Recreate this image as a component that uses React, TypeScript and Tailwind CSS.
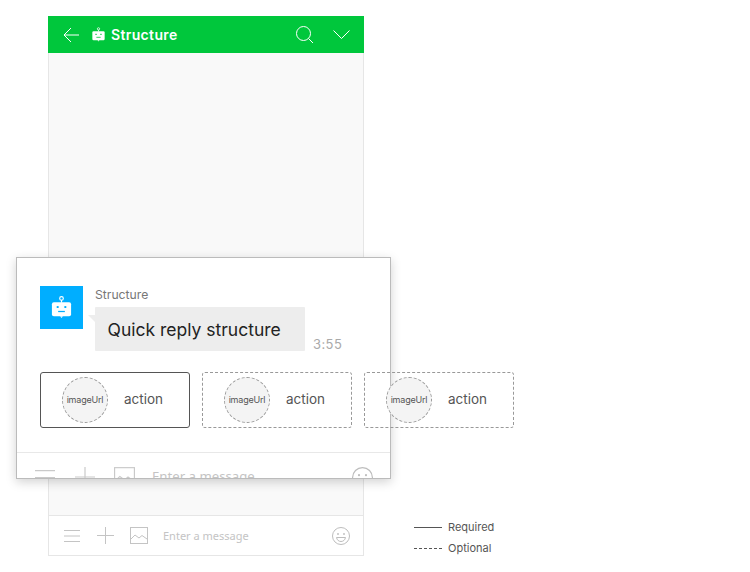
import React from 'react';

const sans = 'font-["Inter","Liberation_Sans",sans-serif]';

function BotIcon({ className, fill, cut }: { className?: string; fill: string; cut: string }) {
  return (
    <svg viewBox="0 0 24 26" className={className}>
      <circle cx="12" cy="3" r="1.9" fill="none" stroke={fill} strokeWidth="1.2" />
      <rect x="11.4" y="4.5" width="1.2" height="3" fill={fill} />
      <rect x="2" y="7" width="20" height="14.5" rx="2" fill={fill} />
      <path d="M10.5 21.5h3L12 23.5z" fill={fill} />
      <rect x="7" y="11" width="2" height="2" fill={cut} />
      <rect x="15" y="11" width="2" height="2" fill={cut} />
      <rect x="8.5" y="16" width="7" height="1.3" fill={cut} />
    </svg>
  );
}

function InputIcons({ big }: { big?: boolean }) {
  const stroke = big ? '#c9c9c9' : '#c4c4c4';
  return (
    <>
      <svg viewBox="0 0 16 12" className={big ? 'w-[20px] h-[15px]' : 'w-[16px] h-[12px]'} fill="none" stroke={stroke}>
        <path d="M0 .5h16M0 6h16M0 11.5h16" />
      </svg>
      <svg viewBox="0 0 17 17" className={big ? 'w-[20px] h-[20px] ml-[20px]' : 'w-[17px] h-[17px] ml-[17px]'} fill="none" stroke={stroke}>
        <path d="M0 8.5h17M8.5 0v17" />
      </svg>
      <svg viewBox="0 0 18 17" className={big ? 'w-[21px] h-[20px] ml-[19px] -mt-[1px]' : 'w-[18px] h-[17px] ml-[16px]'} fill="none" stroke={stroke}>
        <rect x=".5" y=".5" width="17" height="16" />
        <path d="M1 12l4-4 4 3 3-2.5 5 3.5" />
      </svg>
    </>
  );
}

function Smile({ className }: { className?: string }) {
  return (
    <svg viewBox="0 0 18 18" className={className} fill="none" stroke="#bdbdbd">
      <circle cx="9" cy="9" r="8.5" />
      <circle cx="6" cy="7" r=".9" fill="#bdbdbd" stroke="none" />
      <circle cx="12" cy="7" r=".9" fill="#bdbdbd" stroke="none" />
      <path d="M4.500 10.500h9c-.5 2.500-2.200 4-4.500 4s-4-1.500-4.500-4z" />
    </svg>
  );
}

function QuickReply({ required }: { required?: boolean }) {
  return (
    <div
      className={`w-[150px] h-[56px] shrink-0 flex items-center pl-[21px] rounded-[3px] border ${
        required ? 'border-solid border-[#555555]' : 'border-dashed border-[#999999]'
      }`}
    >
      <div className="w-[46px] h-[46px] rounded-full border border-dashed border-[#999999] bg-[#f4f4f4] flex items-center justify-center text-[9px] text-[#555555] tracking-[-0.2px]">
        imageUrl
      </div>
      <span className="ml-[16px] -mt-[1px] text-[13.5px] text-[#555555]">action</span>
    </div>
  );
}

export default function App() {
  return (
    <div className={`relative w-[750px] h-[572px] bg-white overflow-hidden ${sans}`}>
      {/* phone behind */}
      <div className="ml-[48px] mt-[16px] w-[316px] h-[540px] absolute flex flex-col border-x border-b border-[#e6e6e6]">
        <div className="-mx-px h-[37px] bg-[#00c73c] flex items-center pl-[15px] pr-[14px] text-white">
          <svg viewBox="0 0 16 16" className="w-[16px] h-[16px]" fill="none" stroke="#ffffff">
            <path d="M16 8H1M8 1L1 8l7 7" />
          </svg>
          <BotIcon className="w-[15px] h-[16px] ml-[12px]" fill="#ffffff" cut="#00c73c" />
          <span className="ml-[5px] text-[14px] font-semibold tracking-[0.35px]">Structure</span>
          <svg viewBox="0 0 17 17" className="w-[17px] h-[17px] ml-auto" fill="none" stroke="#ffffff">
            <circle cx="7.5" cy="7.5" r="7" />
            <path d="M12.500 12.500L17 17" />
          </svg>
          <svg viewBox="0 0 17 9" className="w-[17px] h-[9px] ml-[20px]" fill="none" stroke="#ffffff">
            <path d="M.5.5L8.500 8.500 16.500.500" />
          </svg>
        </div>
        <div className="flex-1 bg-[#f9f9f9]" />
        <div className="h-[40px] border-t border-[#e6e6e6] bg-white flex items-center pl-[15px] pr-[14px]">
          <InputIcons />
          <span className='ml-[15px] mt-[1px] text-[11px] text-[#c4c4c4] font-["Noto_Sans",sans-serif]'>Enter a message</span>
          <Smile className="w-[18px] h-[18px] ml-auto mr-[-1px]" />
        </div>
      </div>

      {/* enlarged message card */}
      <div className="absolute left-[16px] top-[257px] w-[375px] h-[222px] bg-white border border-[#bbbbbb] shadow-[0_3px_10px_rgba(0,0,0,0.18)] flex flex-col">
        <div className="flex pl-[23px] pt-[28px]">
          <div className="w-[43px] h-[43px] bg-[#00aeff] flex items-center justify-center">
            <BotIcon className="w-[23px] h-[28px]" fill="#ffffff" cut="#00aeff" />
          </div>
          <div className="ml-[12px]">
            <div className="text-[12.2px] leading-[15px] text-[#777777] mt-[1px]">Structure</div>
            <div className="flex items-end mt-[5px]">
              <div className="relative w-[210px] h-[44px] bg-[#ededed] rounded-[1px] flex items-center pl-[12.500px] pt-[2px] text-[17.5px] text-[#222222]">
                <span className="absolute -left-[7px] top-[8px] w-0 h-0 border-t-[7px] border-l-[7px] border-t-[#ededed] border-l-transparent" />
                Quick reply structure
              </div>
              <span className="ml-[8px] -mb-[1px] text-[13px] leading-[16px] text-[#aaaaaa] tracking-[0.4px]">3:55</span>
            </div>
          </div>
        </div>
        <div className="flex gap-[12px] pl-[23px] mt-[21px]">
          <QuickReply required />
          <QuickReply />
          <QuickReply />
        </div>
        <div className="mt-[24px] flex-1 border-t border-[#e8e8e8] overflow-hidden flex items-start pl-[18px] pr-[17px] pt-[14px]">
          <div className="flex items-center h-[20px] shrink-0">
            <InputIcons big />
          </div>
          <span className='ml-[17px] -mt-[1px] text-[13.2px] leading-[21px] text-[#c4c4c4] font-["Noto_Sans",sans-serif]'>Enter a message</span>
          <Smile className="w-[21px] h-[21px] ml-auto shrink-0" />
        </div>
      </div>

      {/* legend */}
      <div className="absolute left-[414px] top-[520px] flex flex-col gap-[6px] text-[11px] leading-[15px] text-[#555555]">
        <div className="flex items-center gap-[6px]">
          <span className="w-[28px] border-t border-solid border-[#555555]" />
          Required
        </div>
        <div className="flex items-center gap-[6px]">
          <span className="w-[28px] border-t border-dashed border-[#555555]" />
          Optional
        </div>
      </div>
    </div>
  );
}
